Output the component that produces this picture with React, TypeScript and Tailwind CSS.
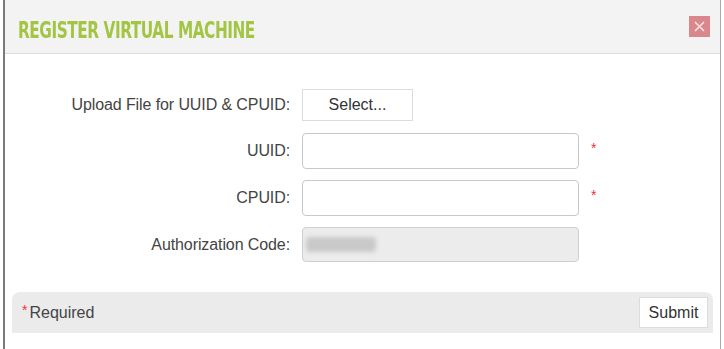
import React from "react";

const font = { fontFamily: '"Liberation Sans", Arial, sans-serif' };

function Row({ label, children, star, extra }: { label: string; children: React.ReactNode; star?: boolean; extra?: string }) {
  return (
    <div className={"flex items-center " + (extra ?? "")}>
      <div className="w-[285px] text-right text-[16px] text-[#444] tracking-[-0.1px]">{label}</div>
      <div className="ml-[12px]">{children}</div>
      {star && <span className="ml-[12px] text-[#e33] text-[14px] leading-none -mt-[6px]">*</span>}
    </div>
  );
}

export default function App() {
  return (
    <div className="w-[724px] h-[349px] bg-white overflow-hidden" style={font}>
      <div className="ml-[3px] w-[718px] h-[349px] border-l-2 border-[#7a7a7a] border-r border-r-[#a8a8a8] flex flex-col">
        <div className="h-[54px] bg-[#f3f3f3] border-b border-[#dcdcdc] flex items-center justify-between pl-[13px] pr-[10px]">
          <div
            className="text-[#a3c543] font-bold text-[23px] leading-none tracking-[-0.6px] origin-left scale-x-[0.74] whitespace-nowrap mt-[7px]"
            style={{ fontFamily: '"DejaVu Sans Condensed", "DejaVu Sans", sans-serif' }}
          >
            REGISTER VIRTUAL MACHINE
          </div>
          <div className="w-[21px] h-[21px] bg-[#d9868c] flex items-center justify-center -mt-[1px]">
            <svg width="11" height="11" viewBox="0 0 11 11">
              <path d="M1 1L10 10M10 1L1 10" stroke="#f8e4e5" strokeWidth="1.6" />
            </svg>
          </div>
        </div>
        <div className="flex flex-col pt-[35px] gap-[11px]">
          <Row label="Upload File for UUID & CPUID:" extra="mb-[1px]">
            <div className="w-[111px] h-[32px] border border-[#dcdcdc] bg-white flex items-center justify-center text-[16px] text-[#333]">
              Select...
            </div>
          </Row>
          <Row label="UUID:" star>
            <div className="w-[277px] h-[36px] border border-[#c8c8c8] rounded-[4px] bg-white" />
          </Row>
          <Row label="CPUID:" star>
            <div className="w-[277px] h-[36px] border border-[#c8c8c8] rounded-[4px] bg-white" />
          </Row>
          <Row label="Authorization Code:">
            <div className="w-[277px] h-[35px] border border-[#cfcfcf] rounded-[4px] bg-[#ececec] flex items-center pl-[3px]">
              <div className="w-[70px] h-[15px] bg-[#c9c9c9] blur-[2px] rounded-sm" />
            </div>
          </Row>
        </div>
        <div className="mt-[30px] mx-[7px] h-[41px] bg-[#ebebeb] rounded-t-[8px] flex items-center justify-between pl-[10px] pr-[5px]">
          <div className="text-[16px] text-[#444] flex items-center">
            <span className="text-[#e33] text-[14px] mr-[2px] -mt-[4px]">*</span>Required
          </div>
          <div className="w-[69px] h-[31px] bg-white border border-[#dcdcdc] flex items-center justify-center text-[16px] text-[#333]">
            Submit
          </div>
        </div>
      </div>
    </div>
  );
}
